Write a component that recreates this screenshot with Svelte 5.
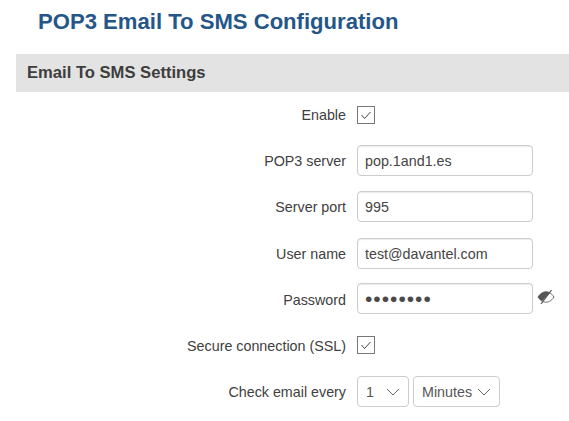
<script>
let rows = [
  { label: "POP3 server", value: "pop.1and1.es" },
  { label: "Server port", value: "995" },
  { label: "User name", value: "test@davantel.com" }
];
</script>

<div class="page">
  <h2>POP3 Email To SMS Configuration</h2>
  <div class="section">
    <h3>Email To SMS Settings</h3>
    <div class="form">
      <div class="row">
        <span class="label">Enable</span>
        <span class="check"><svg viewBox="0 0 16 16" width="16" height="16"><path d="M3.5 8 L6.5 11.5 L12.5 5" fill="none" stroke="#444" stroke-width="1"/></svg></span>
      </div>
      {#each rows as r}
        <div class="row">
          <span class="label">{r.label}</span>
          <input class="text" type="text" value={r.value} />
        </div>
      {/each}
      <div class="row">
        <span class="label">Password</span>
        <input class="text pass" type="password" value="12345678" />
        <svg class="eye" viewBox="0 0 18 16" width="18" height="16">
          <path d="M1 8 C4 3.5 7 2.8 9 2.8 C11 2.8 14 3.5 17 8 C14 12.5 11 13.2 9 13.2 C7 13.2 4 12.5 1 8 Z" fill="none" stroke="#666" stroke-width="1"/>
          <path d="M1 8 C4 3.5 7 2.8 9 2.8 C10.5 2.8 12 3.2 13 4 L5 12.2 C3.5 11.2 2 9.8 1 8 Z" fill="#555"/>
          <path d="M14.5 1 L4 15" stroke="#555" stroke-width="1.2"/>
        </svg>
      </div>
      <div class="row">
        <span class="label">Secure connection (SSL)</span>
        <span class="check"><svg viewBox="0 0 16 16" width="16" height="16"><path d="M3.5 8 L6.5 11.5 L12.5 5" fill="none" stroke="#444" stroke-width="1"/></svg></span>
      </div>
      <div class="row">
        <span class="label">Check email every</span>
        <div class="select small">1<svg viewBox="0 0 14 8" width="14" height="8"><path d="M1 1 L7 7 L13 1" fill="none" stroke="#666" stroke-width="1"/></svg></div>
        <div class="select">Minutes<svg viewBox="0 0 14 8" width="14" height="8"><path d="M1 1 L7 7 L13 1" fill="none" stroke="#666" stroke-width="1"/></svg></div>
      </div>
    </div>
  </div>
</div>

<style>
  :global(body) {
    margin: 0;
    background: #fff;
  }

  .page {
    width: 569px;
    height: 421px;
    overflow: hidden;
    font-family: "Liberation Sans", Arial, sans-serif;
    color: #404040;
    font-size: 14.3px;
  }

  h2 {
    margin: 0;
    padding: 9px 0 0 38px;
    height: 45px;
    box-sizing: border-box;
    font-size: 22.1px;
    line-height: 26px;
    font-weight: bold;
    color: #255688;
  }

  .section {
    margin: 9px 0 0 16px;
  }

  h3 {
    margin: 0;
    height: 38px;
    padding-left: 11px;
    background: #e3e3e3;
    font-size: 16.6px;
    line-height: 37px;
    font-weight: bold;
    color: #3d3d3d;
  }

  .form {
    display: flex;
    flex-direction: column;
    padding-top: 7px;
    gap: 15.2px;
  }

  .row {
    display: flex;
    align-items: center;
    height: 31px;
  }

  .label {
    width: 330px;
    text-align: right;
    margin-right: 11px;
    padding-top: 1px;
  }

  .check {
    width: 16px;
    height: 16px;
    border: 1px solid #777;
    display: block;
  }

  .check svg {
    display: block;
  }

  .text {
    width: 176px;
    height: 31px;
    box-sizing: border-box;
    border: 1px solid #ccc;
    border-radius: 4px;
    padding: 1px 7px 0;
    font-family: inherit;
    font-size: 14.3px;
    color: #444;
    box-shadow: inset 0 1px 1px rgba(0, 0, 0, 0.08);
    outline: none;
  }

  .pass {
    font-size: 21px;
    letter-spacing: 1px;
    color: #4a4a4a;
    margin-bottom: 1px;
  }

  .eye {
    margin: 0 0 5px 4px;
  }

  .select {
    box-sizing: border-box;
    height: 31px;
    width: 87px;
    border: 1px solid #ccc;
    border-radius: 4px;
    display: flex;
    align-items: center;
    justify-content: space-between;
    padding: 1px 8px 0;
    color: #555;
  }

  .select.small {
    width: 52px;
    margin-right: 4px;
  }
</style>
